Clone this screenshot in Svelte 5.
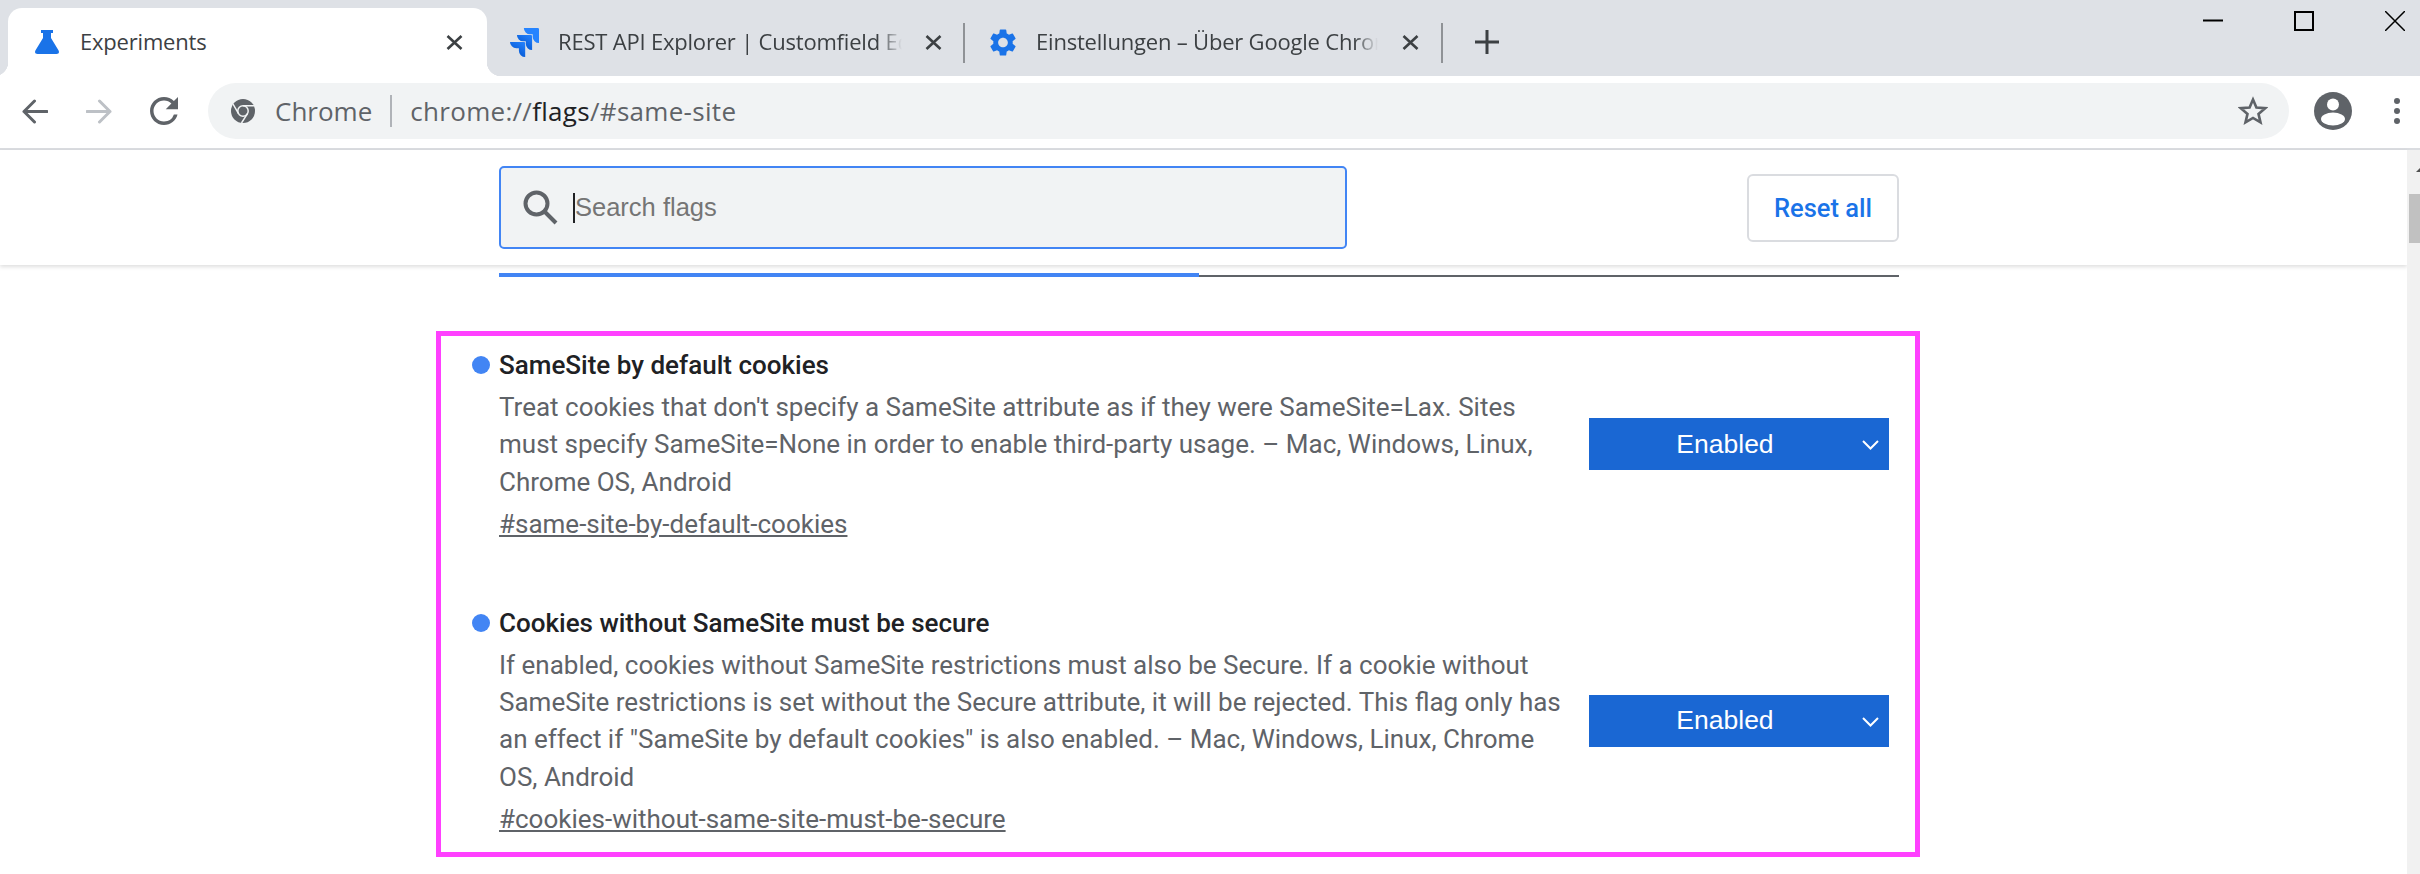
<script>
  const experiments = [
    {
      title: 'SameSite by default cookies',
      desc: "Treat cookies that don't specify a SameSite attribute as if they were SameSite=Lax. Sites must specify SameSite=None in order to enable third-party usage. – Mac, Windows, Linux, Chrome OS, Android",
      link: '#same-site-by-default-cookies'
    },
    {
      title: 'Cookies without SameSite must be secure',
      desc: 'If enabled, cookies without SameSite restrictions must also be Secure. If a cookie without SameSite restrictions is set without the Secure attribute, it will be rejected. This flag only has an effect if "SameSite by default cookies" is also enabled. – Mac, Windows, Linux, Chrome OS, Android',
      link: '#cookies-without-same-site-must-be-secure'
    }
  ];
</script>

{#snippet closeIcon()}
  <svg class="close" viewBox="0 0 17 15"><path d="M1.5 1 L15.5 14 M15.5 1 L1.5 14" /></svg>
{/snippet}

<div class="window">
  <div class="strip">
    <div class="tab active">
      <svg class="flask" viewBox="0 0 24 24"><path d="M6 0h12v3h-2v5l7.6 12.6q1.4 3.4-2.1 3.4H2.5q-3.5 0-2.1-3.4L8 8V3H6z" /></svg>
      <span class="tab-title">Experiments</span>
      {@render closeIcon()}
    </div>
    <div class="tab jira">
      <svg class="jira-logo" viewBox="0 0 24 24">
        <defs>
          <linearGradient id="jg" x1="1" y1="0" x2="0.3" y2="1">
            <stop offset="0" stop-color="#2684ff" />
            <stop offset="1" stop-color="#0052cc" />
          </linearGradient>
        </defs>
        <path fill="#2684ff" d="M23.013 0H11.455a5.215 5.215 0 0 0 5.215 5.215h2.129v2.057A5.215 5.215 0 0 0 24 12.483V1.005A1.001 1.001 0 0 0 23.013 0Z" />
        <path fill="url(#jg)" d="M17.294 5.757H5.736a5.215 5.215 0 0 0 5.215 5.214h2.129v2.058a5.218 5.218 0 0 0 5.215 5.214V6.758a1.001 1.001 0 0 0-1.001-1.001z" />
        <path fill="url(#jg)" d="M11.571 11.513H0a5.218 5.218 0 0 0 5.232 5.215h2.13v2.057A5.215 5.215 0 0 0 12.575 24V12.518a1.005 1.005 0 0 0-1.005-1.005z" />
      </svg>
      <span class="tab-title fade">REST API Explorer | Customfield Editor</span>
      {@render closeIcon()}
    </div>
    <div class="sep"></div>
    <div class="tab settings">
      <svg class="gear" viewBox="2.5 2 19 20"><path d="M19.14 12.94c.04-.3.06-.61.06-.94 0-.32-.02-.64-.07-.94l2.03-1.58a.49.49 0 0 0 .12-.61l-1.92-3.32a.488.488 0 0 0-.59-.22l-2.39.96c-.5-.38-1.03-.7-1.62-.94l-.36-2.54a.484.484 0 0 0-.48-.41h-3.84c-.24 0-.43.17-.47.41l-.36 2.54c-.59.24-1.13.57-1.62.94l-2.39-.96c-.22-.08-.47 0-.59.22L2.74 8.87c-.12.21-.08.47.12.61l2.03 1.58c-.05.3-.09.63-.09.94s.02.64.07.94l-2.03 1.58a.49.49 0 0 0-.12.61l1.92 3.32c.12.22.37.29.59.22l2.39-.96c.5.38 1.03.7 1.62.94l.36 2.54c.05.24.24.41.48.41h3.84c.24 0 .44-.17.47-.41l.36-2.54c.59-.24 1.13-.56 1.62-.94l2.39.96c.22.08.47 0 .59-.22l1.92-3.32c.12-.22.07-.47-.12-.61l-2.01-1.58zM12 15.6c-1.98 0-3.6-1.62-3.6-3.6s1.62-3.6 3.6-3.6 3.6 1.62 3.6 3.6-1.62 3.6-3.6 3.6z" /></svg>
      <span class="tab-title fade">Einstellungen – Über Google Chrome</span>
      {@render closeIcon()}
    </div>
    <div class="sep"></div>
    <svg class="plus" viewBox="0 0 26 24"><path d="M13 0v24M1 12h24" /></svg>
    <div class="win-controls">
      <svg viewBox="0 0 20 20"><path d="M0 9.5h20" stroke-width="2" /></svg>
      <svg viewBox="0 0 20 20"><rect x="1" y="1" width="18" height="18" stroke-width="2" /></svg>
      <svg viewBox="0 0 20 20"><path d="M0 0L20 20M20 0L0 20" stroke-width="1.5" /></svg>
    </div>
  </div>

  <div class="toolbar">
    <svg class="nav" viewBox="0 0 26 25"><path d="M25 12.5H2M12.5 2L2 12.5L12.5 23" /></svg>
    <svg class="nav off" viewBox="0 0 26 25"><path d="M1 12.5H24M13.5 2L24 12.5L13.5 23" /></svg>
    <svg class="reload" viewBox="4 4 16 16"><path d="M17.65 6.35A7.958 7.958 0 0 0 12 4c-4.42 0-7.99 3.58-7.99 8s3.57 8 7.99 8c3.73 0 6.84-2.55 7.73-6h-2.08A5.99 5.99 0 0 1 12 18c-3.31 0-6-2.69-6-6s2.69-6 6-6c1.66 0 3.14.69 4.22 1.78L13 11h7V4l-2.35 2.35z" /></svg>
    <div class="omnibox">
      <svg class="chrome" viewBox="0 0 24 24">
        <circle cx="12" cy="12" r="12" fill="#5f6368" />
        <circle cx="12" cy="12" r="5.2" fill="#5f6368" stroke="#f1f3f4" stroke-width="1.5" />
        <path d="M12 6.8H23M7.5 14.6L2 5M16.5 14.6L10.5 24" stroke="#f1f3f4" stroke-width="1.5" fill="none" />
      </svg>
      <span class="origin">Chrome</span>
      <span class="divider"></span>
      <span class="url">chrome://<b>flags</b>/#same-site</span>
      <svg class="star" viewBox="0 0 30 30"><path d="M15 3.5l3.4 8 8.8.7-6.7 5.7 2 8.5-7.5-4.5-7.5 4.5 2-8.5-6.7-5.7 8.800-.7z" /></svg>
    </div>
    <svg class="avatar" viewBox="0 0 38 38">
      <circle cx="19" cy="19" r="19" fill="#5f6368" />
      <circle cx="19" cy="12.500" r="6" fill="#fff" />
      <ellipse cx="19" cy="27" rx="12" ry="6.500" fill="#fff" />
    </svg>
    <div class="menu"><i></i><i></i><i></i></div>
  </div>

  <div class="viewport">
    <main>
      <header>
        <div class="search">
          <svg class="glass" viewBox="0 0 35 35"><circle cx="13.500" cy="13.500" r="11" /><path d="M21.500 21.500L33 33" /></svg>
          <span class="caret"></span>
          <span class="placeholder">Search flags</span>
        </div>
        <button class="reset">Reset all</button>
      </header>
      <div class="lines">
        <div class="line-blue"></div>
        <div class="line-dark"></div>
      </div>
      <section class="box">
        {#each experiments as exp}
          <div class="experiment">
            <div class="info">
              <h2><span class="dot"></span>{exp.title}</h2>
              <p>{exp.desc}</p>
              <a href={exp.link}>{exp.link}</a>
            </div>
            <div class="select">
              <span>Enabled</span>
              <svg viewBox="0 0 17 10"><path d="M1 1l7.500 7.500L16 1" /></svg>
            </div>
          </div>
        {/each}
      </section>
    </main>
    <div class="scrollbar">
      <div class="arrow"></div>
      <div class="thumb"></div>
    </div>
  </div>
</div>

<style>
  :global(body) {
    background: #fff;
    overflow: hidden;
  }

  .window {
    width: 2420px;
    height: 874px;
    overflow: hidden;
    display: flex;
    flex-direction: column;
    font-family: "Open Sans", "Noto Sans", sans-serif;
  }

  .strip {
    height: 76px;
    box-sizing: border-box;
    padding: 8px 0 0 8px;
    background: #dee1e6;
    display: flex;
    align-items: center;
    flex-shrink: 0;
  }

  .tab {
    height: 68px;
    box-sizing: border-box;
    display: flex;
    align-items: center;
    flex-shrink: 0;
    position: relative;
  }

  .tab.active {
    width: 479px;
    padding: 0 24px 0 27px;
    gap: 21px;
    background: #fff;
    border-radius: 14px 14px 0 0;
  }

  .tab.active::before,
  .tab.active::after {
    content: '';
    position: absolute;
    bottom: 0;
    width: 14px;
    height: 14px;
  }

  .tab.active::before {
    left: -14px;
    background: radial-gradient(circle at 0 0, transparent 14px, #fff 14.5px);
  }

  .tab.active::after {
    right: -14px;
    background: radial-gradient(circle at 100% 0, transparent 14px, #fff 14.5px);
  }

  .tab.jira {
    width: 476px;
    padding: 0 21px 0 23px;
    gap: 19px;
  }

  .tab.settings {
    width: 476px;
    padding: 0 22px 0 25px;
    gap: 20px;
  }

  .tab-title {
    flex: 1;
    min-width: 0;
    overflow: hidden;
    white-space: nowrap;
    font-size: 22px;
    line-height: 30px;
    margin-bottom: 2px;
    letter-spacing: -0.2px;
    color: #3c4043;
  }

  .fade {
    margin-right: -2px;
    -webkit-mask-image: linear-gradient(to right, #000 calc(100% - 30px), transparent calc(100% - 6px));
    mask-image: linear-gradient(to right, #000 calc(100% - 30px), transparent calc(100% - 6px));
  }

  .flask {
    width: 24px;
    height: 24px;
    fill: #1a73e8;
    flex-shrink: 0;
  }

  .jira-logo {
    width: 29px;
    height: 29px;
    flex-shrink: 0;
  }

  .gear {
    width: 26px;
    height: 27px;
    fill: #1a73e8;
    flex-shrink: 0;
  }

  .close {
    width: 17px;
    height: 15px;
    flex-shrink: 0;
    fill: none;
    stroke: #3c4043;
    stroke-width: 2.6;
  }

  .sep {
    width: 2px;
    height: 40px;
    margin-top: 2px;
    background: #8f9296;
    flex-shrink: 0;
  }

  .plus {
    width: 26px;
    height: 24px;
    margin-left: 31px;
    fill: none;
    stroke: #3c4043;
    stroke-width: 3;
    flex-shrink: 0;
  }

  .win-controls {
    margin-left: auto;
    align-self: flex-start;
    margin-top: 3px;
    padding-right: 15px;
    display: flex;
    gap: 71px;
  }

  .win-controls svg {
    width: 20px;
    height: 20px;
    fill: none;
    stroke: #000;
    display: block;
  }

  .toolbar {
    height: 74px;
    box-sizing: border-box;
    border-bottom: 2px solid #dadce0;
    padding: 0 20px 2px 22px;
    display: flex;
    align-items: center;
    background: #fff;
    flex-shrink: 0;
  }

  .nav {
    width: 26px;
    height: 25px;
    margin-right: 38px;
    fill: none;
    stroke: #5f6368;
    stroke-width: 3;
    stroke-linecap: round;
    stroke-linejoin: round;
    flex-shrink: 0;
  }

  .nav.off {
    stroke: #bdc1c6;
  }

  .reload {
    width: 28px;
    height: 28px;
    margin-right: 30px;
    fill: #5f6368;
    flex-shrink: 0;
  }

  .omnibox {
    flex: 1;
    height: 56px;
    border-radius: 28px;
    background: #f1f3f4;
    display: flex;
    align-items: center;
    padding: 0 21px 0 23px;
  }

  .chrome {
    width: 24px;
    height: 24px;
    margin-right: 20px;
  }

  .origin {
    font-size: 26px;
    color: #5f6368;
  }

  .divider {
    width: 2px;
    height: 32px;
    margin: 0 18px;
    background: #b0b3b8;
  }

  .url {
    font-size: 26px;
    letter-spacing: 0.3px;
    color: #5f6368;
  }

  .url b {
    font-weight: 400;
    color: #202124;
  }

  .star {
    width: 30px;
    height: 30px;
    margin-left: auto;
    fill: none;
    stroke: #5f6368;
    stroke-width: 2.6;
  }

  .avatar {
    width: 38px;
    height: 38px;
    margin-left: 25px;
    flex-shrink: 0;
  }

  .menu {
    margin-left: 42px;
    display: flex;
    flex-direction: column;
    gap: 4px;
  }

  .menu i {
    display: block;
    width: 6px;
    height: 6px;
    border-radius: 50%;
    background: #5f6368;
  }

  .viewport {
    flex: 1;
    display: flex;
    min-height: 0;
  }

  main {
    flex: 1;
    min-width: 0;
  }

  header {
    height: 115px;
    box-sizing: border-box;
    padding: 16px 0 0 499px;
    display: flex;
    align-items: flex-start;
    box-shadow: 0 2px 4px rgba(0, 0, 0, 0.13);
    background: #fff;
  }

  .search {
    width: 848px;
    height: 83px;
    box-sizing: border-box;
    border: 2px solid #4285f4;
    border-radius: 5px;
    background: #f1f3f4;
    padding-left: 22px;
    display: flex;
    align-items: center;
  }

  .glass {
    width: 35px;
    height: 35px;
    margin-right: 15px;
    fill: none;
    stroke: #5f6368;
    stroke-width: 4;
  }

  .caret {
    width: 2px;
    height: 30px;
    background: #202124;
  }

  .placeholder {
    font-family: "Liberation Sans", Arial, sans-serif;
    font-size: 25.5px;
    color: #757575;
  }

  .reset {
    width: 152px;
    height: 68px;
    margin: 8px 0 0 400px;
    padding: 0;
    box-sizing: border-box;
    border: 2px solid #dadce0;
    border-radius: 6px;
    background: #fff;
    font-family: Roboto, sans-serif;
    font-size: 25.5px;
    font-weight: 500;
    color: #1a73e8;
  }

  .lines {
    width: 1400px;
    margin: 8px 0 0 499px;
    height: 4px;
    display: flex;
    align-items: flex-end;
  }

  .line-blue {
    width: 700px;
    height: 4px;
    background: #4285f4;
  }

  .line-dark {
    flex: 1;
    height: 2px;
    background: #5f6368;
  }

  .box {
    width: 1484px;
    box-sizing: border-box;
    margin: 54px 0 0 436px;
    border: 5px solid #ff40ff;
    padding: 12px 26px 16px 31px;
    display: flex;
    flex-direction: column;
    gap: 65px;
    font-family: Roboto, sans-serif;
  }

  .experiment {
    display: flex;
    align-items: center;
    justify-content: space-between;
  }

  .info {
    width: 1100px;
  }

  h2 {
    margin: 0;
    display: flex;
    align-items: center;
    gap: 9px;
    height: 34px;
    font-size: 26px;
    font-weight: 500;
    color: #202124;
  }

  .dot {
    width: 18px;
    height: 18px;
    border-radius: 50%;
    background: #4285f4;
  }

  p {
    margin: 7px 0 0 27px;
    font-size: 26px;
    line-height: 37.3px;
    color: #5f6368;
  }

  a {
    display: block;
    margin: 6px 0 0 27px;
    font-size: 26px;
    line-height: 34px;
    color: #5f6368;
  }

  .select {
    width: 300px;
    height: 52px;
    flex-shrink: 0;
    background: #1a67d3;
    color: #fff;
    font-family: "Liberation Sans", Arial, sans-serif;
    font-size: 26.5px;
    display: flex;
    align-items: center;
    justify-content: center;
    position: relative;
  }

  .select span {
    margin-right: 28px;
  }

  .select svg {
    position: absolute;
    right: 10px;
    top: 22px;
    width: 17px;
    height: 10px;
    fill: none;
    stroke: #fff;
    stroke-width: 2;
  }

  .scrollbar {
    width: 13px;
    box-sizing: border-box;
    background: #f1f1f1;
    padding: 17px 0 0 2px;
    flex-shrink: 0;
  }

  .arrow {
    width: 0;
    height: 0;
    margin-left: 7px;
    border-left: 5px solid transparent;
    border-right: 5px solid transparent;
    border-bottom: 5px solid #505050;
  }

  .thumb {
    margin-top: 22px;
    height: 49px;
    background: #c1c1c1;
  }
</style>
